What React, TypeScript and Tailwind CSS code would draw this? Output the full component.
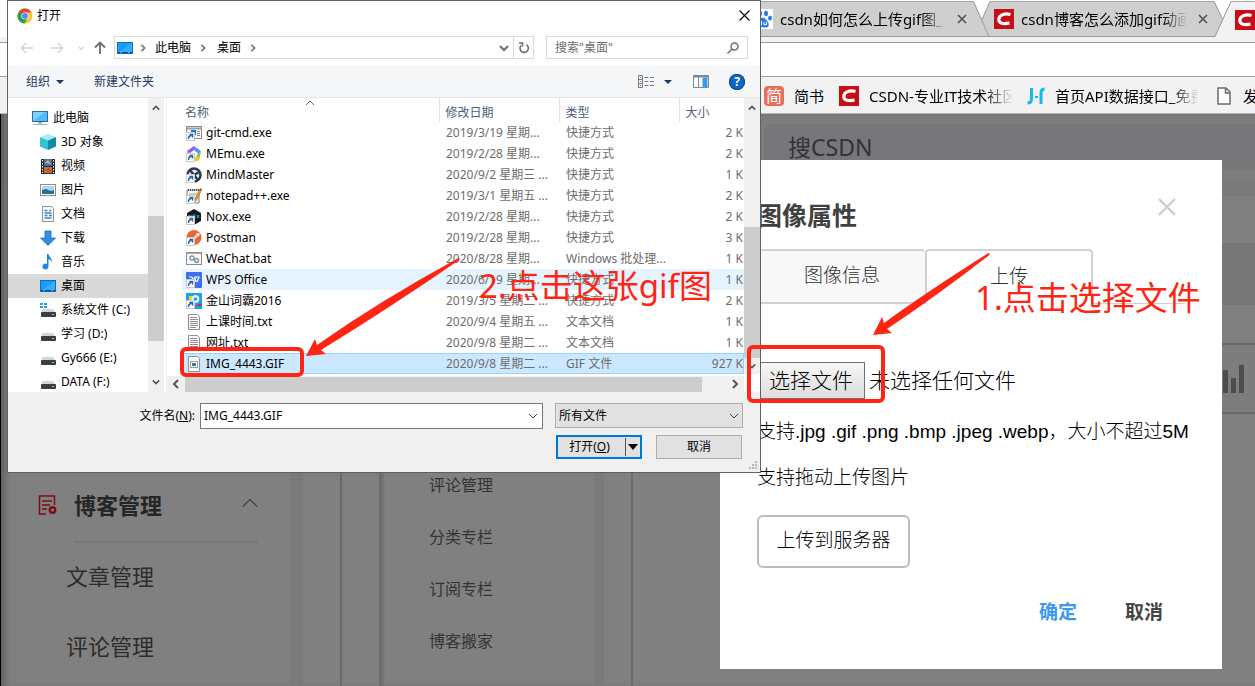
import type { ReactNode } from 'react';

const navItems = [
  { label: '此电脑', icon: 'pc', root: true },
  { label: '3D 对象', icon: 'cube' },
  { label: '视频', icon: 'video' },
  { label: '图片', icon: 'picture' },
  { label: '文档', icon: 'doc' },
  { label: '下载', icon: 'download' },
  { label: '音乐', icon: 'music' },
  { label: '桌面', icon: 'desktop', active: true },
  { label: '系统文件 (C:)', icon: 'system' },
  { label: '学习 (D:)', icon: 'drive' },
  { label: 'Gy666 (E:)', icon: 'drive' },
  { label: 'DATA (F:)', icon: 'drive' }
];

const files = [
  { name: 'git-cmd.exe', icon: 'git', date: '2019/3/19 星期...', type: '快捷方式', size: '2 K' },
  { name: 'MEmu.exe', icon: 'memu', date: '2019/2/28 星期...', type: '快捷方式', size: '2 K' },
  { name: 'MindMaster', icon: 'mind', date: '2020/9/2 星期三 ...', type: '快捷方式', size: '1 K' },
  { name: 'notepad++.exe', icon: 'notepad', date: '2019/3/1 星期五 ...', type: '快捷方式', size: '2 K' },
  { name: 'Nox.exe', icon: 'nox', date: '2019/2/28 星期...', type: '快捷方式', size: '2 K' },
  { name: 'Postman', icon: 'postman', date: '2019/2/28 星期...', type: '快捷方式', size: '3 K' },
  { name: 'WeChat.bat', icon: 'bat', date: '2020/8/28 星期...', type: 'Windows 批处理...', size: '1 K' },
  { name: 'WPS Office', icon: 'wps', date: '2020/6/19 星期...', type: '快捷方式', size: '1 K', state: 'hover' },
  { name: '金山词霸2016', icon: 'ciba', date: '2019/3/5 星期二 ...', type: '快捷方式', size: '2 K' },
  { name: '上课时间.txt', icon: 'txt', date: '2020/9/4 星期五 ...', type: '文本文档', size: '1 K' },
  { name: '网址.txt', icon: 'txt', date: '2020/9/8 星期二 ...', type: '文本文档', size: '1 K' },
  { name: 'IMG_4443.GIF', icon: 'gif', date: '2020/9/8 星期二 ...', type: 'GIF 文件', size: '927 K', state: 'selected' }
];

const drive = (
  <>
    <path d="M3 7h10l3 4H1z" fill="#d4d4d4" />
    <rect x="1" y="10" width="15" height="5" rx="1" fill="#3c3c3c" />
    <rect x="12" y="12" width="2" height="1" fill="#4dff7c" />
  </>
);

const desktop = (
  <>
    <rect x="0.5" y="2.5" width="15" height="11" fill="#1b9dfb" stroke="#0c6fb8" />
    <path d="M1 13 15 3v10z" fill="#3aacff" />
    <path d="M1 12.5h2M5 12.5h6M13 12.5h2" stroke="#0b4a80" />
  </>
);

const page = (
  <>
    <path d="M2.500.5h9l2 2v13h-11z" fill="#fafafa" stroke="#8f8f8f" />
  </>
);

const shortcut = (
  <>
    <rect x="0.500" y="7.500" width="8" height="8" fill="#fff" stroke="#c8c8c8" />
    <path d="M2.500 14c0-2.500 1-3.500 3-3.500M3.500 9.500h3v3" fill="none" stroke="#1f5fae" strokeWidth="1.400" />
  </>
);

const glyphs: Record<string, ReactNode> = {
  pc: (
    <>
      <rect x="0.500" y="1.500" width="15" height="10" fill="#4dbdfb" stroke="#2a6f9e" />
      <path d="M1 11 13 2H1z" fill="#7fd3ff" />
      <path d="M6 12h4v1.500H6z" fill="#8fa5b3" />
      <path d="M1 14.500h14" stroke="#9db6c5" />
    </>
  ),
  cube: (
    <>
      <path d="M8 0l8 3-8 4-8-4z" fill="#a5ecf3" />
      <path d="M0 3l8 3.500V16l-8-3.500z" fill="#35c1d4" />
      <path d="M16 3L8 6.500V16l8-3.500z" fill="#118da6" />
    </>
  ),
  video: (
    <>
      <rect x="1" y="1" width="14" height="15" fill="#2b2b2b" />
      <rect x="4" y="1" width="8" height="7" fill="#496fc0" />
      <rect x="4" y="9" width="8" height="6" fill="#b9792f" />
      <path d="M5 5l3-3 3 4z" fill="#e2b93c" />
      <path d="M5 12l4-2 2 4z" fill="#d63d2e" />
      <path d="M2.500 2v13M13.500 2v13" stroke="#fff" strokeDasharray="1.500 1.500" />
    </>
  ),
  picture: (
    <>
      <rect x="0.500" y="2.500" width="15" height="11" fill="#fff" stroke="#8d8d8d" />
      <rect x="2" y="4" width="12" height="8" fill="#a9d8fb" />
      <path d="M2 8l4-1 5 2 3-1v4H2z" fill="#2f6f86" />
    </>
  ),
  doc: (
    <>
      {page}
      <path d="M4.500 4.500h3M4.500 7h7M4.500 9.500h3M9 9.500h3M4.500 12h7M9 4.500h2" stroke="#3686c4" strokeWidth="1.300" />
    </>
  ),
  download: <path d="M5 1h6v7h4.500L8 15.500.5 8H5z" fill="#2f8de4" stroke="#1c6dbb" strokeWidth="0.800" />,
  music: <path d="M7 0h1.500c.5 3 4 4 3.500 8.500-.5-2-1.800-3-3.500-3.300V12.500A3 3 0 1 1 7 10z" fill="#1c87e6" />,
  desktop,
  system: (
    <>
      <path d="M0 1h3v2H0zM4 1h3v2H4zM0 4h3v2H0zM4 4h3v2H4z" fill="#1aa5e8" />
      {drive}
    </>
  ),
  drive,
  git: (
    <>
      <rect x="0.500" y="1.500" width="15" height="12" fill="#f5f5f5" stroke="#8b8b8b" />
      <path d="M1 3.500h14" stroke="#a0a0a0" strokeWidth="2" />
      <path d="M5 5h5v5H5z" fill="#1479d8" />
      <path d="M11 6.500h3M11 8.500h3M11 10.500h3" stroke="#8b8b8b" />
      {shortcut}
    </>
  ),
  memu: (
    <>
      <path d="M8 0 1 5l3 2 4-3z" fill="#8c5bff" />
      <path d="M8 0l7 5-3 2.500L8 4z" fill="#5a8bff" />
      <path d="M15 5l-2 9-4 0 3-7z" fill="#6ccf3c" />
      <path d="M8 11h6l-2 4H8z" fill="#ffc02e" />
      <path d="M1 5l3 2v3H2z" fill="#ff4f8b" />
      {shortcut}
    </>
  ),
  mind: (
    <>
      <circle cx="8" cy="8" r="6.500" fill="#e9eef5" stroke="#2c3a50" strokeWidth="2.500" />
      <path d="M4 3l4 5 5-3M8 8l4 5" stroke="#2c3a50" strokeWidth="2.500" fill="none" />
      {shortcut}
    </>
  ),
  notepad: (
    <>
      <path d="M1 2h12v13H1z" fill="#f3f7ee" stroke="#7b7b7b" />
      <path d="M2 2h11" stroke="#555" strokeWidth="2" strokeDasharray="1 1" />
      <path d="M3 6h8M3 8h6" stroke="#9ab06f" />
      <path d="M14 1l1.500 1-5 10-2 2 .5-3z" fill="#f2b01e" stroke="#a1481b" strokeWidth="0.600" />
      <path d="M13.500 1.500 15 0l1 1.500-1 1z" fill="#d12c2c" />
      {shortcut}
    </>
  ),
  nox: (
    <>
      <path d="M8 0l7 4v8l-7 4-7-4V4z" fill="#17191d" />
      <path d="M3 9V6l2 3V6M7 6h2v3H7zM11 6l2 3M13 6l-2 3" stroke="#29b8cf" strokeWidth="0.900" fill="none" />
      {shortcut}
    </>
  ),
  postman: (
    <>
      <circle cx="8" cy="7.500" r="7.500" fill="#f06430" />
      <path d="M5 10l5-5 2 1-5 5z" fill="#fff" />
      <circle cx="12" cy="4.500" r="1.700" fill="#fff" />
      {shortcut}
    </>
  ),
  bat: (
    <>
      <rect x="0.500" y="1.500" width="15" height="12" fill="#f8f8f8" stroke="#8b8b8b" />
      <path d="M1 2.500h14" stroke="#b0b0b0" />
      <circle cx="6" cy="7" r="2" fill="none" stroke="#8795a3" strokeWidth="1.500" />
      <circle cx="10.500" cy="9.500" r="2" fill="none" stroke="#8795a3" strokeWidth="1.500" />
    </>
  ),
  wps: (
    <>
      <rect width="16" height="16" rx="1" fill="#3a6fee" />
      <path d="M3 5h3l1 4 2-4h4l-2 5M9 5l1 5" stroke="#fff" strokeWidth="1.200" fill="none" />
      {shortcut}
    </>
  ),
  ciba: (
    <>
      <rect width="16" height="16" rx="1" fill="#16a4f2" />
      <path d="M3 3h5v6H3z" fill="#ffd021" />
      <circle cx="9.500" cy="6" r="3.500" fill="#fff" stroke="#e9f6ff" />
      <circle cx="9.500" cy="6" r="1.800" fill="#16a4f2" />
      <path d="M9 13h6v-3z" fill="#e8233f" />
      {shortcut}
    </>
  ),
  txt: (
    <>
      {page}
      <path d="M4 3.500h7M4 5.500h8M4 7.500h8M4 9.500h8M4 11.500h8M4 13.500h6" stroke="#8d8d8d" />
    </>
  ),
  gif: (
    <>
      {page}
      <rect x="4.500" y="5.500" width="7" height="6" fill="#fff" stroke="#9a9a9a" />
      <rect x="6" y="7" width="4" height="3" fill="#3b78a8" />
    </>
  )
};

function Glyph({ name }: { name: string }) {
  return (
    <svg viewBox="0 0 16 16" className="size-4 shrink-0" aria-hidden="true">
      {glyphs[name]}
    </svg>
  );
}

function Chevron({ d, className }: { d: string; className: string }) {
  return (
    <svg viewBox="0 0 10 10" className={className} fill="none" stroke="currentColor" aria-hidden="true">
      <path d={d} />
    </svg>
  );
}

const UP = 'M1 7l4-4 4 4';
const DOWN = 'M1 3l4 4 4-4';
const LEFT = 'M7 1L3 5l4 4';
const RIGHT = 'M3 1l4 4-4 4';

function CsdnLogo() {
  return (
    <svg viewBox="0 0 20 20" className="size-5 shrink-0" aria-hidden="true">
      <rect width="20" height="20" fill="#ca0c16" />
      <path d="M16.500 5.500c-5-1.200-11.200-.5-11.700 4.500-.4 4.700 4.700 5.200 10.700 4.200" fill="none" stroke="#fff" strokeWidth="3.200" />
    </svg>
  );
}

function BrowserTab({ icon, title }: { icon: ReactNode; title: string }) {
  return (
    <div className="mt-px flex h-9 w-[223px] shrink-0 items-center border-t border-b border-t-[#a6a6a6] border-b-[#999] bg-[#cfcfcf] pr-0.5 pl-1">
      {icon}
      <button className="ml-[7px] h-6 flex-1 overflow-hidden text-left text-[15px] leading-6 whitespace-nowrap [mask-image:linear-gradient(to_right,black_85%,transparent)]">
        {title}
      </button>
      <button aria-label="关闭标签" className="ml-2 flex size-4 items-center justify-center text-[#4f4f4f]">
        <svg viewBox="0 0 10 10" className="size-2.5" stroke="currentColor" strokeWidth="1.600">
          <path d="M1 1l8 8M9 1l-8 8" />
        </svg>
      </button>
    </div>
  );
}

function TabStrip() {
  return (
    <div className="flex h-[37px] overflow-hidden bg-white pl-[749px]">
      <BrowserTab
        title="csdn如何怎么上传gif图_百度"
        icon={
          <svg viewBox="0 0 20 20" className="size-5 shrink-0" aria-hidden="true">
            <rect width="20" height="20" fill="#fff" />
            <g fill="#2d78f4">
              <ellipse cx="7" cy="4.500" rx="2" ry="2.800" />
              <ellipse cx="13" cy="4.500" rx="2" ry="2.800" />
              <ellipse cx="3" cy="9" rx="2" ry="2.600" />
              <ellipse cx="17" cy="9" rx="2" ry="2.600" />
              <path d="M10 8.500c2 0 3 2.500 4.500 4s2 5.500-1 6c-2 .3-5-.5-7 0-3 0-3.500-4-1.500-6 1.500-1.500 3-4 5-4z" />
            </g>
            <path d="M11 13v2.500h2.500V13M8.500 12v4H6v-2h2" stroke="#fff" fill="none" />
          </svg>
        }
      />
      <svg viewBox="0 0 18 37" className="h-[37px] w-[18px] shrink-0" aria-hidden="true">
        <rect y="1" width="18" height="36" fill="#cfcfcf" />
        <path d="M1 0h17L10 19z" fill="#fff" />
        <path d="M0 1.500h1.500L17 36.500h1M10 19.500L18 1.500M0 36.500h18" fill="none" stroke="#999" />
      </svg>
      <BrowserTab title="csdn博客怎么添加gif动画图" icon={<CsdnLogo />} />
      <svg viewBox="0 0 18 37" className="h-[37px] w-[18px] shrink-0" aria-hidden="true">
        <rect y="1" width="18" height="36" fill="#cfcfcf" />
        <path d="M18 1v36H2z" fill="#f2f2f2" />
        <path d="M1 0h17v1L9.500 19z" fill="#fff" />
        <path d="M0 1.500h1L9.500 19M18 1.500L2 36.500H0" fill="none" stroke="#999" />
      </svg>
      <div className="mt-px flex flex-1 items-center border-t border-[#a6a6a6] bg-[#f2f2f2] pl-1">
        <CsdnLogo />
      </div>
    </div>
  );
}

function Bookmarks() {
  return (
    <nav className="flex h-[38px] items-center overflow-hidden border-t border-b border-t-[#a0a0a0] border-b-[#b5b5b5] bg-[#f2f2f2] pt-0.5 pl-[764px] text-[15px] whitespace-nowrap">
      <a href="#" className="flex w-[75px] shrink-0 items-center gap-2.5">
        <span className="flex size-5 items-center justify-center rounded-sm bg-[#ea6f5a] text-[16px] leading-5 text-white">简</span>
        简书
      </a>
      <a href="#" className="flex w-[188px] shrink-0 items-center gap-2.5">
        <CsdnLogo />
        <span className="w-[144px] overflow-hidden [mask-image:linear-gradient(to_right,black_80%,transparent)]">CSDN-专业IT技术社区</span>
      </a>
      <a href="#" className="flex w-[190px] shrink-0 items-center gap-2.5">
        <svg viewBox="0 0 18 18" className="size-[18px] shrink-0" fill="none" stroke="#17b8ee" strokeWidth="3" aria-hidden="true">
          <path d="M4.500 1v11c0 2.500-1 4-4 4M17.500 2c-3 0-3.500 1.500-3.500 4v11" />
          <path d="M8 10h3" strokeWidth="2" />
        </svg>
        <span className="w-[144px] overflow-hidden [mask-image:linear-gradient(to_right,black_80%,transparent)]">首页API数据接口_免费</span>
      </a>
      <a href="#" className="flex shrink-0 items-center gap-3">
        <svg viewBox="0 0 14 18" className="h-[18px] w-3.5 shrink-0" fill="#fff" stroke="#6a6a6a" strokeWidth="1.500" aria-hidden="true">
          <path d="M1 1h8l4 4v12H1zM8.500 1v5H13" />
        </svg>
        发现
      </a>
    </nav>
  );
}

function BlogPage() {
  return (
    <div className="flex flex-1 flex-col bg-[#808080]">
      <div className="flex h-[70px] items-start bg-[#7d7d7e] pt-2.5 pl-[764px] shadow-[inset_1px_0_0_#000,inset_8px_0_6px_-3px_rgba(0,0,0,0.25)]">
        <label htmlFor="site-search" className="sr-only">搜索</label>
        <input id="site-search" placeholder="搜CSDN" className="h-[46px] flex-1 rounded-l-lg bg-[#777779] px-6 text-[23px] placeholder:text-[#303338] focus:outline-none" />
      </div>

      <div className="flex flex-1 shadow-[inset_1px_0_0_#000,inset_8px_0_6px_-3px_rgba(0,0,0,0.25)]">
        <aside className="w-[303px] shrink-0 border-r-[13px] border-[#7a7a7a] pt-[300px] pl-[37px]">
          <div className="flex items-center">
            <svg viewBox="0 0 20 20" className="size-5" fill="none" stroke="#7d0c14" strokeWidth="1.500" aria-hidden="true">
              <path d="M9 19H2.500V1h15v9M5 6h10M5 10h8M5 14h5" />
              <circle cx="15.500" cy="15" r="2.700" strokeWidth="2.400" />
            </svg>
            <h2 className="ml-[17px] text-[22px] leading-[42px] font-bold text-[#262626]">博客管理</h2>
            <Chevron d={UP} className="mb-1 ml-[79px] size-[18px] text-[#3e3e3e] [stroke-width:0.7]" />
          </div>
          <hr className="mt-[15px] mr-8 ml-[37px] border-t-2 border-[#767676]" />
          <div className="-mt-0.5 pl-[29px] text-[22px] leading-[70px] text-[#2c2c2c]">
            <a href="#" className="block">文章管理</a>
            <a href="#" className="block">评论管理</a>
          </div>
        </aside>
        <div className="w-[39px] shrink-0 border-r-2 border-[#686868]" />
        <div className="w-[39px] shrink-0 border-r-2 border-[#6c6c6c]" />
        <aside className="w-[223px] shrink-0 border-r-[10px] border-[#7a7a7a] pt-[275px] pl-12 text-[16px] leading-[52px] text-[#343434] shadow-[inset_4px_0_3px_-2px_rgba(0,0,0,0.15)]">
          <a href="#" className="block">评论管理</a>
          <a href="#" className="block">分类专栏</a>
          <a href="#" className="block">订阅专栏</a>
          <a href="#" className="block">博客搬家</a>
        </aside>
        <div className="w-[29px] shrink-0 border-r-2 border-[#6c6c6c]" />
        <section className="flex-1">
          <div className="h-3 bg-[#7a7a7a]" />
          <div className="h-[47px]" />
          <div className="h-[62px] bg-[#777]" />
          <div className="h-[38px]" />
          <div className="flex h-[71px] items-center justify-end border-y-2 border-[#686868] bg-[#7d7d7d] pr-2.5">
            <svg viewBox="0 0 22 30" className="h-[30px] w-[22px]" fill="#4d4d4d" aria-hidden="true">
              <path d="M0 6h5v23H0zM8 14h5v15H8zM16 1h5v28h-5z" />
            </svg>
          </div>
        </section>
      </div>
    </div>
  );
}

function ImageModal() {
  return (
    <div role="dialog" aria-label="图像属性" className="absolute top-40 left-[720px] flex h-[509px] w-[502px] flex-col bg-white px-[37px] pt-9 font-['Liberation_Sans','Noto_Sans_CJK_SC',sans-serif]">
      <div className="flex items-center justify-between">
        <h1 className="text-[25px] leading-10 font-bold text-[#404040]">图像属性</h1>
        <button aria-label="关闭" className="mr-[9px] mb-[18px] text-[#c8c8c8]">
          <svg viewBox="0 0 18 18" className="size-[18px]" stroke="currentColor" strokeWidth="1.800">
            <path d="M1 1l16 16M17 1L1 17" />
          </svg>
        </button>
      </div>
      <div role="tablist" className="mt-[13px] flex h-[55px] text-[19px] font-light text-[#333]">
        <button role="tab" aria-selected="false" className="w-[168px] rounded-t border-2 border-r-0 border-[#d1d1d1] bg-[#f8f8f8]">图像信息</button>
        <button role="tab" aria-selected="true" className="w-[168px] rounded-t border-2 border-b-0 border-[#d1d1d1] bg-white">上传</button>
        <div className="flex-1 border-b border-[#d1d1d1]" />
      </div>
      <div className="mt-[58px] flex items-center text-[21px] font-light text-black">
        <label htmlFor="upload" className="flex h-[37px] w-[108px] items-center justify-center border border-[#707070] bg-linear-to-b from-[#f6f6f6] to-[#dddddd]">选择文件</label>
        <input id="upload" type="file" className="sr-only" />
        <span className="ml-1">未选择任何文件</span>
      </div>
      <p className="mt-[18px] text-[19px] leading-[30px] font-light whitespace-nowrap text-black">支持.jpg .gif .png .bmp .jpeg .webp，大小不超过5M</p>
      <p className="mt-4 text-[19px] leading-[30px] font-light text-black">支持拖动上传图片</p>
      <button className="mt-[22px] h-[53px] w-[153px] rounded-md border-2 border-[#bbb] text-[19px] font-light text-black">上传到服务器</button>
      <div className="mt-[30px] flex justify-end gap-12 pr-[22px] text-[19px] leading-[30px] font-bold">
        <button className="text-[#3b99ee]">确定</button>
        <button className="text-[#444]">取消</button>
      </div>
    </div>
  );
}

function AddressRow() {
  return (
    <div className="flex h-9 items-center pr-3 pb-[1px] pl-3">
      <button aria-label="后退" className="flex w-[30px] text-[#d5d5d5]">
        <svg viewBox="0 0 14 12" className="h-3 w-3.5" fill="none" stroke="currentColor" strokeWidth="1.700"><path d="M13 6H1.500M6 1L1.500 6 6 11" /></svg>
      </button>
      <button aria-label="前进" className="flex w-7 text-[#d5d5d5]">
        <svg viewBox="0 0 14 12" className="h-3 w-3.5" fill="none" stroke="currentColor" strokeWidth="1.700"><path d="M1 6h11.500M8 1l4.500 5L8 11" /></svg>
      </button>
      <button aria-label="最近" className="flex w-4 text-[#d5d5d5]">
        <Chevron d={DOWN} className="size-1.5 [stroke-width:2.500]" />
      </button>
      <button aria-label="上移" className="flex w-5 text-[#6d6d6d]">
        <svg viewBox="0 0 12 14" className="h-3.5 w-3" fill="none" stroke="currentColor" strokeWidth="1.900"><path d="M6 13V2M1 6.500l5-5 5 5" /></svg>
      </button>
      <div className="flex h-[23px] w-[420px] items-center border border-[#d9d9d9] pl-0.5">
        <Glyph name="desktop" />
        <Chevron d={RIGHT} className="ml-1.5 size-2 text-[#6d6d6d] [stroke-width:2]" />
        <button className="ml-2 w-9">此电脑</button>
        <Chevron d={RIGHT} className="ml-2 size-2 text-[#6d6d6d] [stroke-width:2]" />
        <button className="ml-2.5 w-6">桌面</button>
        <Chevron d={RIGHT} className="ml-2 size-2 text-[#6d6d6d] [stroke-width:2]" />
        <Chevron d={DOWN} className="mr-1 ml-auto size-2.5 text-[#6d6d6d] [stroke-width:2]" />
        <button aria-label="刷新" className="flex h-full w-5 items-center justify-center border-l border-[#d9d9d9] text-[#6d6d6d]">
          <svg viewBox="0 0 12 12" className="size-3" fill="none" stroke="currentColor" strokeWidth="1.600"><path d="M8.500 2.700A4.200 4.200 0 1 1 3 3.500M1 1h3.500v3.500" /></svg>
        </button>
      </div>
      <div className="ml-3 flex h-[23px] flex-1 items-center border border-[#d9d9d9] pr-2 pl-2">
        <label htmlFor="search" className="sr-only">搜索</label>
        <input id="search" placeholder={'搜索"桌面"'} className="w-full min-w-0 placeholder:text-[#6d6d6d] focus:outline-none" />
        <svg viewBox="0 0 12 12" className="size-3 shrink-0 text-[#6d6d6d]" fill="none" stroke="currentColor" strokeWidth="1.500" aria-hidden="true">
          <circle cx="7.500" cy="4.500" r="3.500" /><path d="M5 7l-4.500 4.500" />
        </svg>
      </div>
    </div>
  );
}

function CommandBar() {
  return (
    <div className="flex h-8 items-center border-b border-[#e5e5e5] bg-[#f5f6f7] pr-[15px] pl-[18px] text-[#1e3a5f]">
      <button className="flex items-center gap-1.5">
        组织
        <svg viewBox="0 0 8 4" className="h-1 w-2" fill="currentColor"><path d="M0 0h8L4 4z" /></svg>
      </button>
      <button className="ml-[30px]">新建文件夹</button>
      <button aria-label="更改视图" className="ml-auto flex items-center gap-2.5">
        <svg viewBox="0 0 16 14" className="h-3.5 w-4" fill="none" stroke="#7a7a7a" aria-hidden="true">
          <path d="M.5.5h4v12h-4zM.5 4.500h4M.5 8.500h4M6.500 2.500h4M12 2.500h4M6.500 6.500h4M12 6.500h4M6.500 10.500h4M12 10.500h4" />
          <path d="M2 2.500h1M2 6.500h1" stroke="#2a7fd0" /><path d="M2 10.500h1" stroke="#c33" />
        </svg>
        <svg viewBox="0 0 8 4" className="h-1 w-2" fill="currentColor"><path d="M0 0h8L4 4z" /></svg>
      </button>
      <button aria-label="预览窗格" className="ml-[21px]">
        <svg viewBox="0 0 16 13" className="h-[13px] w-4" fill="#fff" stroke="#7d8790">
          <path d="M.5.5h15v12H.5zM5.500 2v10" /><path d="M1 1.500h14" strokeWidth="2" /><path d="M10 3h4v9h-4z" fill="#3a9be8" stroke="#3a9be8" />
        </svg>
      </button>
      <button aria-label="帮助" className="ml-5 flex size-4 items-center justify-center rounded-full bg-[#0a66c8] text-[12px] leading-4 font-bold text-white ring-1 ring-[#0b4d94] ring-inset">?</button>
    </div>
  );
}

function NavPane() {
  return (
    <div className="flex w-[156px] shrink-0">
      <nav className="w-[140px] overflow-hidden pt-2">
        {navItems.map(item => (
          <a
            key={item.label}
            href="#"
            className={`flex h-6 items-center gap-[5px] whitespace-nowrap ${item.root ? 'pl-6' : 'pl-8'} ${item.active ? 'bg-[#d9d9d9]' : ''}`}
          >
            <Glyph name={item.icon} />
            {item.label}
          </a>
        ))}
      </nav>
      <div className="flex w-4 flex-col items-center bg-[#f0f0f0] pt-1.5 pb-1.5 text-[#555]">
        <Chevron d={UP} className="size-2 [stroke-width:2]" />
        <div className="mt-[104px] h-[125px] w-full bg-[#cdcdcd]" />
        <Chevron d={DOWN} className="mt-auto size-2 [stroke-width:2]" />
      </div>
    </div>
  );
}

function FileTable() {
  return (
    <div className="relative ml-0.5 flex min-w-0 flex-1 flex-col border-l border-[#f0f0f0]">
      <Chevron d={UP} className="absolute top-0 left-[138px] size-2.5 text-[#6d6d6d]" />
      <div className="flex">
        <div className="flex-1 pl-[15px]">
          <table className="w-full table-fixed border-collapse text-left text-[#6d6d6d]">
            <thead>
              <tr className="h-6 text-[#4c607a]">
                <th className="w-[257px] pt-1.5 pb-0 pl-[3px] font-normal">名称</th>
                <th className="w-[120px] border-l border-[#e5e5e5] pt-1.5 pl-1.5 font-normal">修改日期</th>
                <th className="w-[120px] border-l border-[#e5e5e5] pt-1.5 pl-1.5 font-normal">类型</th>
                <th className="border-l border-[#e5e5e5] pt-1.5 pl-1.5 font-normal">大小</th>
              </tr>
            </thead>
            <tbody>
              {files.map(file => (
                <tr
                  key={file.name}
                  className={`h-[21px] leading-5 whitespace-nowrap ${
                    file.state === 'selected' ? 'bg-[#cce8ff] outline outline-[#99d1ff] -outline-offset-1' : file.state === 'hover' ? 'bg-[#e5f3ff]' : ''
                  }`}
                >
                  <td className="pl-1 text-black">
                    <div className="flex items-center gap-1">
                      <Glyph name={file.icon} />
                      {file.name}
                    </div>
                  </td>
                  <td className="pl-[7px]">{file.date}</td>
                  <td className="pl-[7px]">{file.type}</td>
                  <td className="pr-px text-right">{file.size}</td>
                </tr>
              ))}
            </tbody>
          </table>
        </div>
        <div className="flex w-4 flex-col items-center bg-[#f0f0f0] pt-1.5 pb-1 text-[#555]">
          <Chevron d={UP} className="size-2 [stroke-width:2]" />
          <div className="mt-[115px] h-[131px] w-full bg-[#cdcdcd]" />
          <Chevron d={DOWN} className="mt-auto size-2 [stroke-width:2]" />
        </div>
      </div>
      <div className="mt-auto mr-4 flex h-4 items-center bg-[#f0f0f0] pr-1 pl-1 text-[#555]">
        <Chevron d={LEFT} className="size-2.5 [stroke-width:2]" />
        <div className="ml-1 h-[15px] w-[517px] bg-[#cdcdcd]" />
        <Chevron d={RIGHT} className="ml-auto size-2.5 [stroke-width:2]" />
      </div>
    </div>
  );
}

function FileDialog() {
  return (
    <div role="dialog" aria-label="打开" className="absolute top-0 left-[7px] flex h-[473px] w-[754px] flex-col border border-[#606060] bg-white text-[12px] leading-[18px] text-black">
      <div className="flex h-[29px] items-center pr-2.5 pl-[9px]">
        <svg viewBox="0 0 16 16" className="size-4" aria-hidden="true">
          <circle cx="8" cy="8" r="7.500" fill="#fbc926" />
          <path d="M8 8 1.500 4.200A7.500 7.500 0 0 1 14.500 4.500H8z" fill="#de4836" />
          <path d="M1.500 4.200A7.500 7.500 0 0 0 7.500 15.500L11 9.500 8 8z" fill="#1f9f57" />
          <circle cx="8" cy="8" r="3.600" fill="#fff" />
          <circle cx="8" cy="8" r="2.900" fill="#4a8af4" />
        </svg>
        <span className="ml-1">打开</span>
        <button aria-label="关闭" className="ml-auto">
          <svg viewBox="0 0 11 11" className="size-[11px]" stroke="#000" strokeWidth="1.100"><path d="M.5.5l10 10M10.500.5l-10 10" /></svg>
        </button>
      </div>
      <AddressRow />
      <CommandBar />
      <div className="flex h-[294px] overflow-hidden">
        <NavPane />
        <FileTable />
      </div>
      <div className="relative flex-1 bg-[#f0f0f0] pt-[11px] pr-[17px]">
        <div className="flex items-start">
          <label htmlFor="filename" className="w-[192px] pr-[5px] text-right leading-[26px]">文件名(<u>N</u>):</label>
          <div className="flex h-[26px] w-[343px] items-center border border-[#7a7a7a] bg-white pr-1">
            <input id="filename" defaultValue="IMG_4443.GIF" className="min-w-0 flex-1 px-[3px] focus:outline-none" />
            <Chevron d={DOWN} className="size-2.5 text-[#444]" />
          </div>
          <div className="relative ml-3 flex-1">
            <select aria-label="文件类型" className="h-[25px] w-full appearance-none border border-[#adadad] bg-[#e1e1e1] px-[3px]">
              <option>所有文件</option>
            </select>
            <Chevron d={DOWN} className="pointer-events-none absolute top-2 right-1 size-2.5 text-[#444]" />
          </div>
        </div>
        <div className="mt-[6px] mr-px flex justify-end gap-3.5">
          <button className="flex h-6 w-[86px] items-center border-2 border-[#0078d7] bg-[#e1e1e1]">
            <span className="flex-1 pr-1 text-center">打开(<u>O</u>)</span>
            <span className="flex h-[18px] items-center border-l border-[#555] px-0.5">
              <svg viewBox="0 0 10 6" className="h-1.5 w-2.5"><path d="M0 0h10L5 6z" /></svg>
            </span>
          </button>
          <button className="h-6 w-[86px] border border-[#adadad] bg-[#e1e1e1]">取消</button>
        </div>
        <svg viewBox="0 0 9 9" className="absolute right-0.5 bottom-0.5 size-[9px]" fill="#b8b8b8" aria-hidden="true">
          <path d="M6 0h2v2H6zM3 3h2v2H3zM6 3h2v2H6zM0 6h2v2H0zM3 6h2v2H3zM6 6h2v2H6z" />
        </svg>
      </div>
    </div>
  );
}

function Annotations() {
  return (
    <div className="pointer-events-none absolute inset-0 text-[33px] leading-10 whitespace-nowrap text-[#ff2414]">
      <div className="absolute top-[347px] left-[180px] h-[30px] w-[124px] rounded-md border-4 border-[#ff2414]" />
      <div className="absolute top-[345px] left-[747px] h-[58px] w-[138px] rounded-md border-4 border-[#ff2414]" />
      <svg viewBox="0 0 156 100" className="absolute top-[257px] left-[306px] h-[100px] w-[156px]" fill="currentColor">
        <path d="M0 99L9 82l2 6Q75 43 152.500 1l1.500 1.500Q85 50 15 93l5 4z" />
      </svg>
      <svg viewBox="0 0 118 84" className="absolute top-[252px] left-[873px] h-[84px] w-[118px]" fill="currentColor">
        <path d="M0 83L9 65l2 6Q55 39 115.500 1l1.500 1.500Q65 43 14 77l5 4z" />
      </svg>
      <p className="absolute top-[266px] left-[479px]">2.点击这张gif图</p>
      <p className="absolute top-[278px] left-[975px]">1.点击选择文件</p>
    </div>
  );
}

export default function App() {
  return (
    <div className="relative flex min-h-screen flex-col overflow-hidden bg-white font-['Noto_Sans','Noto_Sans_CJK_SC',sans-serif]">
      <TabStrip />
      <div className="h-1.5 border-b border-[#999] bg-[#f2f2f2]" />
      <div className="h-[33px] bg-white" />
      <Bookmarks />
      <BlogPage />
      <ImageModal />
      <FileDialog />
      <Annotations />
    </div>
  );
}
